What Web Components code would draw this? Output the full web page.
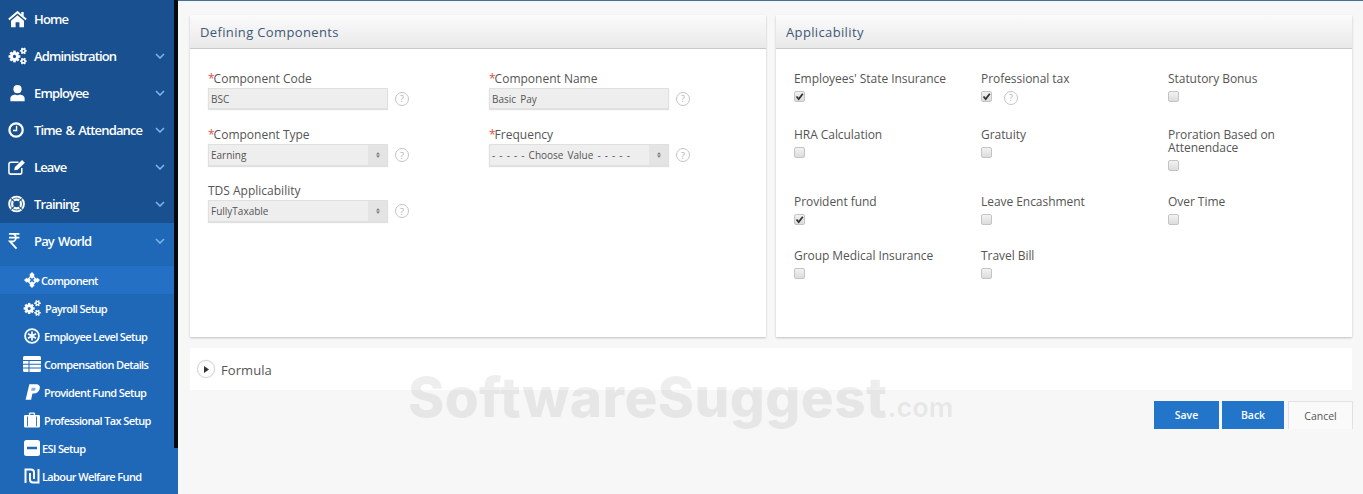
<!DOCTYPE html>
<html>
<head>
<meta charset="utf-8">
<title>Pay World - Component</title>
<style>
  html, body { margin: 0; height: 100%; overflow: hidden; }
  body { font-family: "Open Sans", "Liberation Sans", sans-serif; background: #f7f7f7; }
  app-layout { height: 494px; }
</style>
</head>
<body>
<app-layout>
  <app-sidebar slot="side">
    <nav-item data-icon="home" data-plain="true">Home</nav-item>
    <nav-item data-icon="cogs">Administration</nav-item>
    <nav-item data-icon="user">Employee</nav-item>
    <nav-item data-icon="clock">Time &amp; Attendance</nav-item>
    <nav-item data-icon="edit">Leave</nav-item>
    <nav-item data-icon="ring">Training</nav-item>
    <nav-item data-icon="rupee">Pay World</nav-item>
    <sub-menu>
      <sub-item data-icon="move" data-active="true" data-gap="0">Component</sub-item>
      <sub-item data-icon="cogs" data-gap="4">Payroll Setup</sub-item>
      <sub-item data-icon="snow" data-gap="3">Employee Level Setup</sub-item>
      <sub-item data-icon="table" data-gap="3">Compensation Details</sub-item>
      <sub-item data-icon="paypal" data-gap="3">Provident Fund Setup</sub-item>
      <sub-item data-icon="case" data-gap="3">Professional Tax Setup</sub-item>
      <sub-item data-icon="minus" data-gap="1">ESI Setup</sub-item>
      <sub-item data-icon="shekel" data-gap="1">Labour Welfare Fund</sub-item>
    </sub-menu>
  </app-sidebar>

  <app-card data-title="Defining Components">
    <form-grid>
      <form-field data-label="Component Code" data-required="true" data-value="BSC"></form-field>
      <form-field data-label="Component Name" data-required="true" data-value="Basic Pay"></form-field>
      <form-field data-label="Component Type" data-required="true" data-value="Earning" data-select="true"></form-field>
      <form-field data-label="Frequency" data-required="true" data-value="- - - - - Choose Value - - - - -" data-select="true"></form-field>
      <form-field data-label="TDS Applicability" data-value="FullyTaxable" data-select="true"></form-field>
    </form-grid>
  </app-card>

  <app-card data-title="Applicability">
    <check-grid>
      <check-field data-checked="true">Employees' State Insurance</check-field>
      <check-field data-checked="true" data-help="true">Professional tax</check-field>
      <check-field>Statutory Bonus</check-field>
      <check-field>HRA Calculation</check-field>
      <check-field>Gratuity</check-field>
      <check-field data-wrap="true">Proration Based on Attenendace</check-field>
      <check-field data-checked="true">Provident fund</check-field>
      <check-field>Leave Encashment</check-field>
      <check-field>Over Time</check-field>
      <check-field>Group Medical Insurance</check-field>
      <check-field>Travel Bill</check-field>
    </check-grid>
  </app-card>

  <formula-panel slot="wide">Formula</formula-panel>

  <action-bar slot="wide">
    <action-button data-kind="primary" data-width="65">Save</action-button>
    <action-button data-kind="primary" data-width="62">Back</action-button>
    <action-button data-width="65" data-gap="1">Cancel</action-button>
  </action-bar>

  <water-mark slot="over"></water-mark>
</app-layout>

<script>
// a ring with radial teeth, hole stays transparent
const gear = (cx, cy, r, w, teeth, len) => {
  let out = `<circle cx="${cx}" cy="${cy}" r="${r}" fill="none" stroke="currentColor" stroke-width="${w}"/>`;
  for (let i = 0; i < teeth; i++) {
    const a = (Math.PI * 2 * i) / teeth;
    const x1 = (cx + Math.cos(a) * r).toFixed(2);
    const y1 = (cy + Math.sin(a) * r).toFixed(2);
    const x2 = (cx + Math.cos(a) * (r + w / 2 + len)).toFixed(2);
    const y2 = (cy + Math.sin(a) * (r + w / 2 + len)).toFixed(2);
    out += `<path stroke="currentColor" stroke-width="${(w * .9).toFixed(2)}" d="M${x1} ${y1}L${x2} ${y2}"/>`;
  }
  return out;
};

const ICONS = {
  home: `<svg viewBox="0 0 20 18"><path fill="currentColor" d="M10 .4.2 8.800l1.400 1.600L10 3.300l8.400 7.100 1.400-1.600L16.500 6V1.500H14v2.400zM3.200 10.800 10 5l6.800 5.800v6.900H12v-5.200H8v5.200H3.200z"/></svg>`,
  cogs: `<svg viewBox="0 0 20 18">${gear(6.800, 9.500, 3.200, 3, 8, 1.500)}${gear(16.200, 3.600, 1.800, 1.700, 6, 1)}${gear(16.200, 14.400, 1.800, 1.700, 6, 1)}</svg>`,
  user: `<svg viewBox="0 0 20 18"><circle cx="10" cy="5" r="4.300" fill="currentColor"/><path fill="currentColor" d="M2.500 17.800v-3.300c0-2.500 2.800-3.700 4.900-4 1.600 1.100 3.600 1.100 5.200 0 2.100.3 4.900 1.500 4.900 4v3.300z"/></svg>`,
  clock: `<svg viewBox="0 0 20 18"><circle cx="8.500" cy="9" r="7" fill="none" stroke="currentColor" stroke-width="2.400"/><path fill="none" stroke="currentColor" stroke-width="1.500" d="M9 4.500v5H5.300"/></svg>`,
  edit: `<svg viewBox="0 0 20 18"><path fill="none" stroke="currentColor" stroke-width="1.600" d="M14.500 10v4.500a2 2 0 0 1-2 2H3a2 2 0 0 1-2-2V6a2 2 0 0 1 2-2h8"/><path fill="currentColor" d="M6.500 12.500 7.300 9 14.800 1.500 17.800 4.500 10.200 12z"/></svg>`,
  ring: `<svg viewBox="0 0 20 18"><circle cx="9" cy="9" r="8.800" fill="currentColor"/><circle cx="9" cy="9" r="6.300" fill="none" stroke="#19508f" stroke-width=".9"/><circle cx="9" cy="9" r="3.500" fill="#19508f"/><path stroke="#19508f" stroke-width="1.100" d="M2.800 2.800 6.600 6.600M15.200 2.800 11.400 6.600M2.800 15.200l3.800-3.800M15.200 15.200l-3.800-3.800"/></svg>`,
  rupee: `<svg viewBox="0 0 20 18"><path fill="none" stroke="currentColor" stroke-width="1.900" d="M1 1.500h11M1 5.500h11M2 1.500h2.500c5 0 5 8 0 8H2L9 17"/></svg>`,
  move: `<svg viewBox="0 0 18 18"><path fill="currentColor" d="M9 0l3 3-1 1.500 3 3L15 6.500l3 2.500-3 3-1-1-3 3 1 1-3 3-3-3 1-1-3-3-1 1-3-3 3-2.500L4 7.500l3-3L6 3z"/><path stroke="#2470c4" stroke-width="1.800" d="M6.800 6.800l4.400 4.400M11.200 6.800l-4.400 4.400"/></svg>`,
  snow: `<svg viewBox="0 0 18 18"><circle cx="9" cy="9" r="7.800" fill="none" stroke="currentColor" stroke-width="2"/><path stroke="currentColor" stroke-width="1.900" d="M9 3.800v10.400M4.500 6.400l9 5.200M13.500 6.400l-9 5.200"/></svg>`,
  table: `<svg viewBox="0 0 18 16"><path fill="currentColor" d="M0 1.500A1.500 1.500 0 0 1 1.500 0h15A1.500 1.500 0 0 1 18 1.500V4H0zM0 5h5.500v2.800H0zM6.500 5H18v2.800H6.500zM0 8.800h5.500v2.700H0zM6.500 8.800H18v2.700H6.500zM0 12.500h5.500V16h-4A1.500 1.500 0 0 1 0 14.500zM6.500 12.500H18v2a1.500 1.500 0 0 1-1.500 1.500h-10z"/></svg>`,
  paypal: `<svg viewBox="0 0 18 18"><path fill="currentColor" d="M6 .3h7.500c3.300 0 4.900 2 4.200 5-.8 3.400-3.400 5.500-6.500 5.500H9.500L8 17.700H1.800z"/><path fill="#7fb0e4" d="M8.700 4.200h2.900c1.100 0 1.700.7 1.400 1.700-.3 1.100-1.300 1.800-2.400 1.800H8z"/></svg>`,
  case: `<svg viewBox="0 0 18 18"><path fill="currentColor" fill-rule="evenodd" d="M5.500 3.500V2a1.500 1.500 0 0 1 1.500-1.500h4A1.500 1.500 0 0 1 12.500 2v1.500H16.500A1.500 1.500 0 0 1 18 5v11a1.500 1.500 0 0 1-1.500 1.500h-15A1.500 1.500 0 0 1 0 16V5a1.500 1.500 0 0 1 1.500-1.500zM7 2v1.500h4V2zM3.500 5v11h1V5zM13.500 5v11h1V5z"/></svg>`,
  minus: `<svg viewBox="0 0 16 16"><path fill-rule="evenodd" fill="currentColor" d="M2.500 0h11A2.500 2.500 0 0 1 16 2.500v11a2.500 2.500 0 0 1-2.500 2.500h-11A2.500 2.500 0 0 1 0 13.500v-11A2.500 2.500 0 0 1 2.500 0zM3 6.800v2.400h10V6.800z"/></svg>`,
  shekel: `<svg viewBox="0 0 16 16"><path fill="none" stroke="currentColor" stroke-width="2" d="M1.500 15V1.500H7a3 3 0 0 1 3 3V11M14.500 1V14.500H9a3 3 0 0 1-3-3V5"/></svg>`
};

class AppLayout extends HTMLElement {
  connectedCallback() {
    this.attachShadow({mode: "open"});
    this.shadowRoot.innerHTML = `
      <style>
        :host { display: flex; position: relative; }
        .main {
          flex: 1;
          border-top: 1px solid #3d72a8;
          box-shadow: inset 0 1px 0 #f8f6e6;
          background: #f7f7f7;
          padding: 14px 11px 0 12px;
          min-width: 0;
        }
        .cards {
          display: grid;
          grid-template-columns: 576px 576px;
          column-gap: 10px;
          height: 322px;
        }
      </style>
      <slot name="side"></slot>
      <div class="main">
        <div class="cards"><slot></slot></div>
        <slot name="wide"></slot>
      </div>
      <slot name="over"></slot>
    `;
  }
}
customElements.define("app-layout", AppLayout);

class AppSidebar extends HTMLElement {
  connectedCallback() {
    this.attachShadow({mode: "open"});
    this.shadowRoot.innerHTML = `
      <style>
        :host {
          display: block;
          flex: none;
          position: relative;
          width: 178px;
          box-sizing: border-box;
          background: #1f68b8;
          color: #fff;
          font-family: "Open Sans", "Liberation Sans", sans-serif;
        }
        .strip { position: absolute; top: 0; right: 0; width: 4px; height: 448px; background: #05080c; }
        .top { background: #19508f; height: 223px; position: absolute; top: 0; left: 0; right: 0; }
        .list { position: relative; }
      </style>
      <div class="top"></div>
      <div class="list"><slot></slot></div>
      <div class="strip"></div>
    `;
  }
}
customElements.define("app-sidebar", AppSidebar);

class NavItem extends HTMLElement {
  connectedCallback() {
    this.attachShadow({mode: "open"});
    const plain = this.getAttribute("data-plain") === "true";
    this.shadowRoot.innerHTML = `
      <style>
        :host {
          display: flex;
          align-items: center;
          height: 37px;
          padding-left: 8px;
          padding-right: 9px;
          box-sizing: border-box;
          width: 174px;
          color: #fff;
        }
        .icon { width: 19px; height: 18px; flex: none; margin-right: 7px; }
        .icon svg { display: block; width: 100%; height: 100%; }
        .text { flex: 1; font-size: 13px; font-weight: 600; letter-spacing: -.85px; word-spacing: 1.500px; white-space: nowrap; }
        .chev { width: 10px; height: 6px; flex: none; color: #7fb2ea; visibility: ${plain ? "hidden" : "visible"}; }
      </style>
      <span class="icon">${ICONS[this.getAttribute("data-icon")]}</span>
      <span class="text"><slot></slot></span>
      <svg class="chev" viewBox="0 0 10 6"><path fill="none" stroke="currentColor" stroke-width="1.600" d="M1 1l4 4 4-4"/></svg>
    `;
  }
}
customElements.define("nav-item", NavItem);

class SubMenu extends HTMLElement {
  connectedCallback() {
    this.attachShadow({mode: "open"});
    this.shadowRoot.innerHTML = `
      <style>
        :host { display: block; padding-top: 7px; background: #1f68b8; }
      </style>
      <slot></slot>
    `;
  }
}
customElements.define("sub-menu", SubMenu);

class SubItem extends HTMLElement {
  connectedCallback() {
    this.attachShadow({mode: "open"});
    const active = this.getAttribute("data-active") === "true";
    const gap = this.getAttribute("data-gap") || "3";
    this.shadowRoot.innerHTML = `
      <style>
        :host {
          display: flex;
          align-items: center;
          height: 28px;
          width: 174px;
          padding-left: 23px;
          box-sizing: border-box;
          background: ${active ? "#2470c4" : "transparent"};
          color: #fff;
        }
        .icon { width: 18px; height: 16px; flex: none; margin-right: ${gap}px; }
        .icon svg { display: block; width: 100%; height: 100%; }
        .text { font-size: 11px; font-weight: 600; letter-spacing: -.62px; white-space: nowrap; }
      </style>
      <span class="icon">${ICONS[this.getAttribute("data-icon")]}</span>
      <span class="text"><slot></slot></span>
    `;
  }
}
customElements.define("sub-item", SubItem);

class AppCard extends HTMLElement {
  connectedCallback() {
    this.attachShadow({mode: "open"});
    this.shadowRoot.innerHTML = `
      <style>
        :host {
          display: block;
          background: #fff;
          box-shadow: 0 1px 2px rgba(0, 0, 0, .22);
          min-width: 0;
        }
        .head {
          height: 33px;
          box-sizing: content-box;
          border-bottom: 1px solid #c9c9c9;
          background: linear-gradient(#fbfbfb, #e9e9e9);
          padding-left: 10px;
          line-height: 34px;
          font-size: 13px;
          color: #3f5876;
          letter-spacing: .36px;
        }
      </style>
      <div class="head">${this.getAttribute("data-title")}</div>
      <slot></slot>
    `;
  }
}
customElements.define("app-card", AppCard);

class FormGrid extends HTMLElement {
  connectedCallback() {
    this.attachShadow({mode: "open"});
    this.shadowRoot.innerHTML = `
      <style>
        :host {
          display: grid;
          grid-template-columns: 281px 1fr;
          grid-auto-rows: 56px;
          padding: 20px 0 0 18px;
        }
      </style>
      <slot></slot>
    `;
  }
}
customElements.define("form-grid", FormGrid);

class HelpIcon extends HTMLElement {
  connectedCallback() {
    this.attachShadow({mode: "open"});
    this.shadowRoot.innerHTML = `
      <style>
        :host {
          display: flex;
          align-items: center;
          justify-content: center;
          width: 14px;
          height: 14px;
          box-sizing: border-box;
          border: 1px solid #c4c4c4;
          border-radius: 50%;
          color: #b0b0b0;
          font-size: 9px;
          flex: none;
        }
      </style>
      ?
    `;
  }
}
customElements.define("help-icon", HelpIcon);

class FormField extends HTMLElement {
  connectedCallback() {
    this.attachShadow({mode: "open"});
    const required = this.getAttribute("data-required") === "true";
    const select = this.getAttribute("data-select") === "true";
    this.shadowRoot.innerHTML = `
      <style>
        :host { display: block; color: #555; }
        .label { height: 19px; line-height: 19px; font-size: 12px; white-space: nowrap; }
        .star { color: #d9534f; margin-right: -1px; }
        .row { display: flex; align-items: center; gap: 7px; }
        .box {
          width: 180px;
          height: ${select ? 22 : 21}px;
          box-sizing: border-box;
          display: flex;
          align-items: center;
          background: #eee;
          border: 1px solid #e0e0e0;
          box-shadow: 0 1px 1px rgba(0, 0, 0, .12);
          padding-left: 2px;
          font-size: 10px;
          word-spacing: 1.500px;
          color: #555;
          white-space: nowrap;
        }
        .value { flex: 1; }
        .arrow {
          width: 19px;
          align-self: stretch;
          background: #e4e4e4;
          display: flex;
          align-items: center;
          justify-content: center;
        }
        .arrow svg { width: 4px; height: 6px; }
      </style>
      <div class="label">${required ? '<span class="star">*</span>' : ""}${this.getAttribute("data-label")}</div>
      <div class="row">
        <div class="box">
          <span class="value">${this.getAttribute("data-value")}</span>
          ${select ? '<span class="arrow"><svg viewBox="0 0 5 7"><path fill="#777" d="M2.500 0 5 3H0zM2.500 7 0 4h5z"/></svg></span>' : ""}
        </div>
        <help-icon></help-icon>
      </div>
    `;
  }
}
customElements.define("form-field", FormField);

class CheckGrid extends HTMLElement {
  connectedCallback() {
    this.attachShadow({mode: "open"});
    this.shadowRoot.innerHTML = `
      <style>
        :host {
          display: grid;
          grid-template-columns: 187px 187px 160px;
          padding: 22.500px 0 0 18px;
        }
      </style>
      <slot></slot>
    `;
  }
}
customElements.define("check-grid", CheckGrid);

class CheckField extends HTMLElement {
  connectedCallback() {
    this.attachShadow({mode: "open"});
    const checked = this.getAttribute("data-checked") === "true";
    const help = this.getAttribute("data-help") === "true";
    const wrap = this.getAttribute("data-wrap") === "true";
    this.shadowRoot.innerHTML = `
      <style>
        :host { display: block; padding-bottom: 23px; color: #555; font-size: 12px; line-height: 13.500px; letter-spacing: -.05px; }
        .row { display: flex; align-items: flex-start; gap: 12px; margin-top: 5.500px; height: ${help ? 14 : 12}px; }
        .tick {
          width: 11px;
          height: 11px;
          box-sizing: border-box;
          border: 1px solid #c4c4c4;
          border-radius: 2px;
          background: linear-gradient(#f2f2f2, #dcdcdc);
          flex: none;
        }
        .tick svg { display: block; width: 9px; height: 9px; }
        .label { display: block; max-width: ${wrap ? "125px" : "none"}; }
      </style>
      <span class="label"><slot></slot></span>
      <div class="row">
        <span class="tick">${checked ? '<svg viewBox="0 0 9 9"><path fill="none" stroke="#333" stroke-width="1.800" d="M1.500 4.500 3.700 7 7.800 1.800"/></svg>' : ""}</span>
        ${help ? "<help-icon></help-icon>" : ""}
      </div>
    `;
  }
}
customElements.define("check-field", CheckField);

class FormulaPanel extends HTMLElement {
  connectedCallback() {
    this.attachShadow({mode: "open"});
    this.shadowRoot.innerHTML = `
      <style>
        :host {
          display: flex;
          align-items: center;
          gap: 6px;
          height: 42px;
          margin-top: 11px;
          padding-left: 7px;
          background: #fff;
          color: #555;
          font-size: 13px;
          letter-spacing: .08px;
        }
        .toggle {
          width: 18px;
          height: 18px;
          box-sizing: border-box;
          border: 1px solid #d4d4d4;
          border-radius: 50%;
          display: flex;
          align-items: center;
          justify-content: center;
          box-shadow: 0 0 1px rgba(0, 0, 0, .2);
        }
        .toggle svg { width: 5px; height: 7px; }
        .text { padding-top: 1px; }
      </style>
      <span class="toggle"><svg viewBox="0 0 5 7"><path fill="#333" d="M0 0l5 3.500L0 7z"/></svg></span>
      <span class="text"><slot></slot></span>
    `;
  }
}
customElements.define("formula-panel", FormulaPanel);

class ActionBar extends HTMLElement {
  connectedCallback() {
    this.attachShadow({mode: "open"});
    this.shadowRoot.innerHTML = `
      <style>
        :host {
          display: flex;
          justify-content: flex-end;
          gap: 3px;
          margin-top: 11px;
          margin-right: -1px;
        }
      </style>
      <slot></slot>
    `;
  }
}
customElements.define("action-bar", ActionBar);

class ActionButton extends HTMLElement {
  connectedCallback() {
    this.attachShadow({mode: "open"});
    const primary = this.getAttribute("data-kind") === "primary";
    this.shadowRoot.innerHTML = `
      <style>
        :host {
          display: flex;
          align-items: center;
          justify-content: center;
          box-sizing: border-box;
          width: ${this.getAttribute("data-width")}px;
          height: 28px;
          margin-left: ${this.getAttribute("data-gap") || 0}px;
          font-size: 10.500px;
          font-weight: ${primary ? 600 : 400};
          background: ${primary ? "#2275c9" : "#fafafa"};
          color: ${primary ? "#fff" : "#555"};
          border: ${primary ? "0" : "1px solid #e2e2e2"};
          border-bottom: 0;
        }
      </style>
      <slot></slot>
    `;
  }
}
customElements.define("action-button", ActionButton);

class WaterMark extends HTMLElement {
  connectedCallback() {
    this.attachShadow({mode: "open"});
    this.shadowRoot.innerHTML = `
      <style>
        :host {
          position: absolute;
          left: 408px;
          top: 362px;
          pointer-events: none;
          white-space: nowrap;
          color: rgba(0, 0, 0, .065);
          font-family: Inter, "Open Sans", sans-serif;
          font-weight: 800;
          font-size: 55px;
          line-height: 70px;
          letter-spacing: .35px;
        }
        small { font-size: 27px; font-weight: 700; letter-spacing: 0; }
      </style>
      SoftwareSuggest<small>.com</small>
    `;
  }
}
customElements.define("water-mark", WaterMark);
</script>
</body>
</html>
